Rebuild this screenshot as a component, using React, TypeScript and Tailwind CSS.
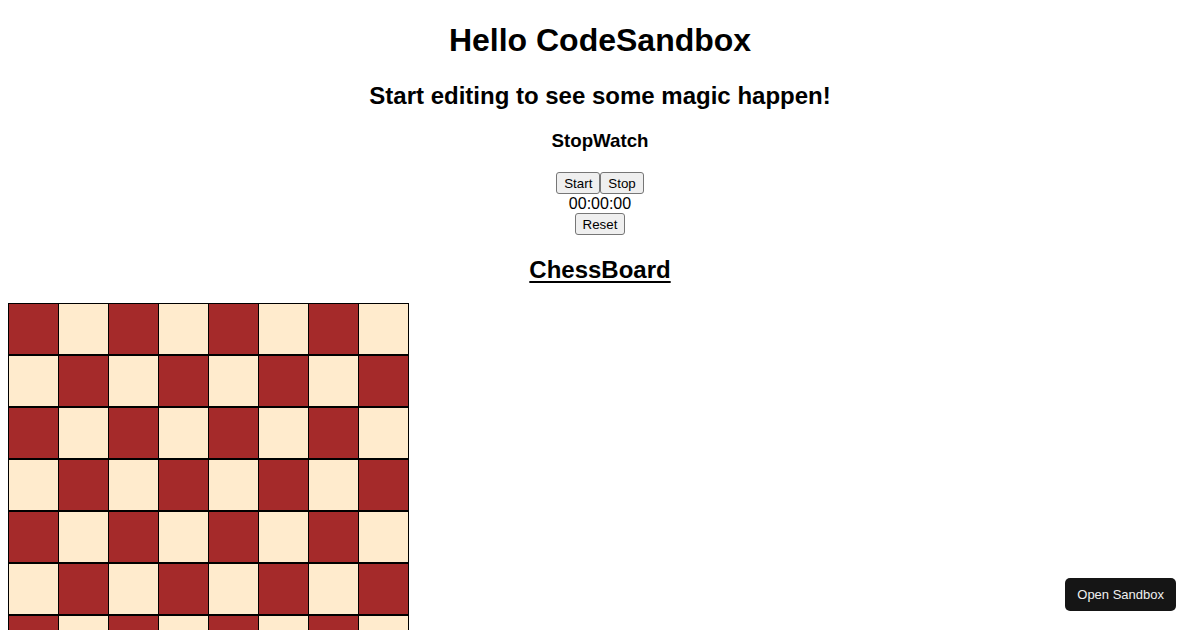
const ROWS = 8;
const COLS = 8;

function StopWatch() {
  const btn =
    'h-[22px] px-[7px] border border-[#767676] bg-[#efefef] rounded-[3px] text-[13.33px] leading-[15px] text-black';
  return (
    <div>
      <h3 className="mt-[20px] text-[18.72px] leading-[22px] font-bold">StopWatch</h3>
      <div className="mt-[20px] flex justify-center">
        <button className={btn}>Start</button>
        <button className={btn}>Stop</button>
      </div>
      <div className="text-[16px] leading-[19px]">00:00:00</div>
      <div className="flex justify-center">
        <button className={btn}>Reset</button>
      </div>
    </div>
  );
}

function ChessBoard() {
  return (
    <div>
      <h2 className="mt-[21px] text-[24px] leading-[28px] font-bold underline underline-offset-[3px] decoration-2">
        ChessBoard
      </h2>
      <div className="mt-[19px] w-fit border-l border-t border-black">
        {Array.from({ length: ROWS }).map((_, r) => (
          <div key={r} className="flex">
            {Array.from({ length: COLS }).map((_, c) => (
              <div
                key={c}
                className={`w-[50px] h-[52px] border-r border-b-2 border-black ${
                  (r + c) % 2 === 0 ? 'bg-[#a52a2a]' : 'bg-[#ffebcd]'
                }`}
              />
            ))}
          </div>
        ))}
      </div>
    </div>
  );
}

export default function App() {
  return (
    <div className="min-h-screen bg-white text-black px-[8px] text-center font-['Liberation_Sans',Arial,sans-serif]">
      <h1 className="pt-[22px] text-[32px] leading-[37px] font-bold">Hello CodeSandbox</h1>
      <h2 className="mt-[23px] text-[24px] leading-[28px] font-bold">Start editing to see some magic happen!</h2>
      <StopWatch />
      <ChessBoard />
      <button className="fixed right-[24px] bottom-[19px] h-[33px] px-[12px] rounded-[5px] bg-[#151515] text-[#f0f0f0] text-[13px] font-['Liberation_Sans',Arial,sans-serif]">
        Open Sandbox
      </button>
    </div>
  );
}
